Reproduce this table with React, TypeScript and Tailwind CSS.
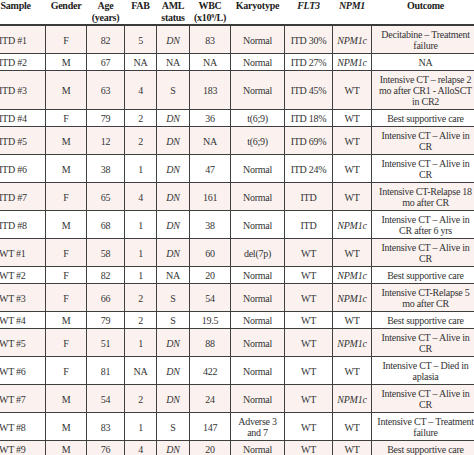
import React from 'react'

type Row = {
  sample: string
  gender: string
  age: string
  fab: string
  aml: string
  wbc: string
  karyo: string[]
  flt3: string
  npm1: string
  outcome: string[]
}

const rows: Row[] = [
  { sample: 'ITD #1', gender: 'F', age: '82', fab: '5', aml: 'DN', wbc: '83', karyo: ['Normal'], flt3: 'ITD 30%', npm1: 'NPM1c', outcome: ['Decitabine – Treatment', 'failure'] },
  { sample: 'ITD #2', gender: 'M', age: '67', fab: 'NA', aml: 'NA', wbc: 'NA', karyo: ['Normal'], flt3: 'ITD 27%', npm1: 'NPM1c', outcome: ['NA'] },
  { sample: 'ITD #3', gender: 'M', age: '63', fab: '4', aml: 'S', wbc: '183', karyo: ['Normal'], flt3: 'ITD 45%', npm1: 'WT', outcome: ['Intensive CT – relapse 2', 'mo after CR1 - AlloSCT', 'in CR2'] },
  { sample: 'ITD #4', gender: 'F', age: '79', fab: '2', aml: 'DN', wbc: '36', karyo: ['t(6;9)'], flt3: 'ITD 18%', npm1: 'WT', outcome: ['Best supportive care'] },
  { sample: 'ITD #5', gender: 'M', age: '12', fab: '2', aml: 'DN', wbc: 'NA', karyo: ['t(6;9)'], flt3: 'ITD 69%', npm1: 'WT', outcome: ['Intensive CT – Alive in', 'CR'] },
  { sample: 'ITD #6', gender: 'M', age: '38', fab: '1', aml: 'DN', wbc: '47', karyo: ['Normal'], flt3: 'ITD 24%', npm1: 'WT', outcome: ['Intensive CT – Alive in', 'CR'] },
  { sample: 'ITD #7', gender: 'F', age: '65', fab: '4', aml: 'DN', wbc: '161', karyo: ['Normal'], flt3: 'ITD', npm1: 'WT', outcome: ['Intensive CT-Relapse 18', 'mo after CR'] },
  { sample: 'ITD #8', gender: 'M', age: '68', fab: '1', aml: 'DN', wbc: '38', karyo: ['Normal'], flt3: 'ITD', npm1: 'NPM1c', outcome: ['Intensive CT – Alive in', 'CR after 6 yrs'] },
  { sample: 'WT #1', gender: 'F', age: '58', fab: '1', aml: 'DN', wbc: '60', karyo: ['del(7p)'], flt3: 'WT', npm1: 'WT', outcome: ['Intensive CT – Alive in', 'CR'] },
  { sample: 'WT #2', gender: 'F', age: '82', fab: '1', aml: 'NA', wbc: '20', karyo: ['Normal'], flt3: 'WT', npm1: 'NPM1c', outcome: ['Best supportive care'] },
  { sample: 'WT #3', gender: 'F', age: '66', fab: '2', aml: 'S', wbc: '54', karyo: ['Normal'], flt3: 'WT', npm1: 'NPM1c', outcome: ['Intensive CT-Relapse 5', 'mo after CR'] },
  { sample: 'WT #4', gender: 'M', age: '79', fab: '2', aml: 'S', wbc: '19.5', karyo: ['Normal'], flt3: 'WT', npm1: 'WT', outcome: ['Best supportive care'] },
  { sample: 'WT #5', gender: 'F', age: '51', fab: '1', aml: 'DN', wbc: '88', karyo: ['Normal'], flt3: 'WT', npm1: 'NPM1c', outcome: ['Intensive CT – Alive in', 'CR'] },
  { sample: 'WT #6', gender: 'F', age: '81', fab: 'NA', aml: 'DN', wbc: '422', karyo: ['Normal'], flt3: 'WT', npm1: 'WT', outcome: ['Intensive CT – Died in', 'aplasia'] },
  { sample: 'WT #7', gender: 'M', age: '54', fab: '2', aml: 'DN', wbc: '24', karyo: ['Normal'], flt3: 'WT', npm1: 'NPM1c', outcome: ['Intensive CT – Alive in', 'CR'] },
  { sample: 'WT #8', gender: 'M', age: '83', fab: '1', aml: 'S', wbc: '147', karyo: ['Adverse 3', 'and 7'], flt3: 'WT', npm1: 'WT', outcome: ['Intensive CT – Treatment', 'failure'] },
  { sample: 'WT #9', gender: 'M', age: '76', fab: '4', aml: 'DN', wbc: '20', karyo: ['Normal'], flt3: 'WT', npm1: 'WT', outcome: ['Best supportive care'] },
]

const td = 'border border-[#3f3f3f] pt-[3px] pb-[2px] px-0 align-middle text-center leading-[11px] whitespace-nowrap'
const th = 'pt-0 pb-0 px-0 align-top text-center leading-[12px] font-bold text-[#222] whitespace-nowrap'

// multi-line cell, each line centred on its own
const Lines = ({ lines }: { lines: string[] }) => (
  <div className="flex flex-col items-center">
    {lines.map((l, i) => (
      <span key={i} className="block text-center">
        {l}
      </span>
    ))}
  </div>
)

export default function App() {
  return (
    <div className="w-[474px] h-[455px] overflow-hidden bg-white">
      <table
        className="table-fixed border-collapse w-[483px] -ml-[4px] text-[10px] tracking-[-0.25px] text-[#333]"
        style={{ fontFamily: '"Liberation Serif", "Times New Roman", serif' }}
      >
        <colgroup>
          <col className="w-[49px]" />
          <col className="w-[41px]" />
          <col className="w-[38px]" />
          <col className="w-[32px]" />
          <col className="w-[33px]" />
          <col className="w-[41px]" />
          <col className="w-[54px]" />
          <col className="w-[48px]" />
          <col className="w-[39px]" />
          <col className="w-[108px]" />
        </colgroup>
        <thead>
          <tr className="h-[25px] border-b-2 border-[#3a3a3a]">
            <th className={`${th} text-left pl-[4px]`}>Sample</th>
            <th className={th}>Gender</th>
            <th className={th}>
              Age
              <br />
              (years)
            </th>
            <th className={th}>FAB</th>
            <th className={th}>
              AML
              <br />
              status
            </th>
            <th className={th}>
              WBC
              <br />
              (x10<sup className="text-[6px]">9</sup>/L)
            </th>
            <th className={th}>Karyotype</th>
            <th className={`${th} italic`}>FLT3</th>
            <th className={`${th} italic`}>NPM1</th>
            <th className={th}>Outcome</th>
          </tr>
        </thead>
        <tbody>
          {rows.map((r, i) => (
            <tr key={r.sample} className={i % 2 === 0 ? 'bg-[#fbf2f0]' : 'bg-white'}>
              <td className={`${td} text-left pl-[2px]`}>{r.sample}</td>
              <td className={td}>{r.gender}</td>
              <td className={td}>{r.age}</td>
              <td className={td}>{r.fab}</td>
              <td className={`${td} ${r.aml === 'DN' ? 'italic' : ''}`}>{r.aml}</td>
              <td className={td}>{r.wbc}</td>
              <td className={td}>
                <Lines lines={r.karyo} />
              </td>
              <td className={td}>{r.flt3}</td>
              <td className={`${td} ${r.npm1 === 'NPM1c' ? 'italic' : ''}`}>{r.npm1}</td>
              <td className={td}>
                <Lines lines={r.outcome} />
              </td>
            </tr>
          ))}
        </tbody>
      </table>
    </div>
  )
}
